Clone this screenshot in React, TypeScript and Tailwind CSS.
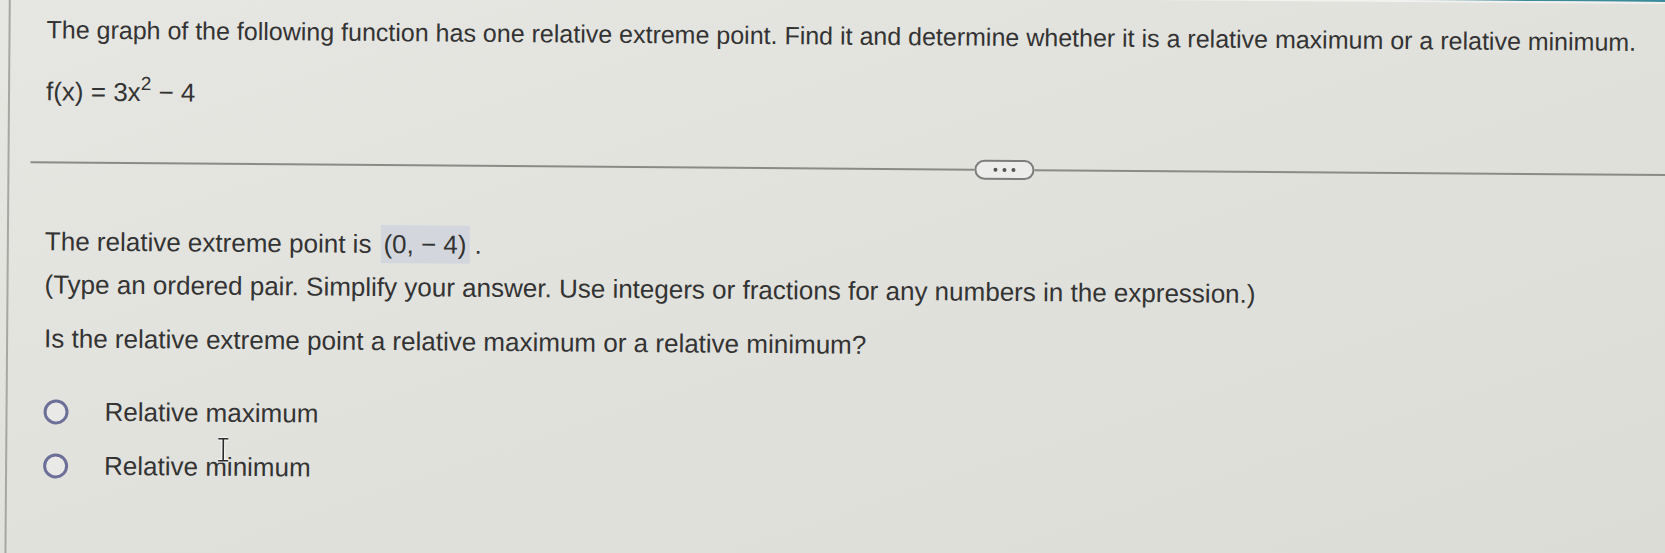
import React from "react";

function Radio({ label, cursor }: { label: string; cursor?: boolean }) {
  return (
    <div className="flex h-[30px] items-center pl-[36px]">
      <div className="h-[25px] w-[25px] shrink-0 rounded-full border-[3px] border-[#6c6f98] bg-[#e9e9e7]" />
      <span className="relative ml-[36px] whitespace-nowrap">
        {label}
        {cursor && (
          <svg
            className="absolute left-[111px] top-[-15px]"
            width="16"
            height="26"
            viewBox="0 0 16 26"
          >
            <path d="M3 2h10M8 2v22M3 24h10" stroke="#f3f3f1" strokeWidth="4" fill="none" />
            <path d="M3 2h10M8 2v22M3 24h10" stroke="#2a2a2a" strokeWidth="1.6" fill="none" />
          </svg>
        )}
      </span>
    </div>
  );
}

export default function App() {
  return (
    <div className="h-[553px] w-[1665px] overflow-hidden bg-linear-to-br from-[#e6e6e2] to-[#dcdcd7] font-['Liberation_Sans',Arial,sans-serif] text-[26px] leading-[30px] text-[#333333]">
      <div className="-mt-[29px] w-[1780px] origin-top-left rotate-[0.45deg]">
        <div className="h-[18px] bg-[#3b8b9b]" />
        <div className="h-[2px] bg-[#f1f1ef]" />
        <div className="ml-[9px] h-[640px] border-l-2 border-[#a6a6a3]">
          <div className="whitespace-nowrap pl-[36px] pt-[23px] text-[25px]">
            The graph of the following function has one relative extreme point. Find it and determine whether it is a relative maximum or a relative minimum.
          </div>
          <div className="mt-[29px] whitespace-nowrap pl-[36px]">
            f(x) = 3x<span className="align-[11px] text-[19px] leading-none">2</span> − 4
          </div>
          <div className="mt-[46px] flex h-[20px] items-center pl-[21px]">
            <div className="h-[2px] w-[944px] bg-[#8a8a87]" />
            <div className="flex h-[20px] w-[60px] shrink-0 items-center justify-center gap-[5px] rounded-full border-2 border-[#7d7d7b] bg-[#ececea]">
              <span className="h-[4px] w-[4px] rounded-full bg-[#555555]" />
              <span className="h-[4px] w-[4px] rounded-full bg-[#555555]" />
              <span className="h-[4px] w-[4px] rounded-full bg-[#555555]" />
            </div>
            <div className="h-[2px] flex-1 bg-[#8a8a87]" />
          </div>
          <div className="mt-[50px] flex h-[38px] items-center whitespace-nowrap pl-[36px]">
            <span>The relative extreme point is</span>
            <span className="ml-[9px] flex h-[38px] items-center bg-[#d3d7dd] px-[3px]">(0, − 4)</span>
            <span className="ml-[5px]">.</span>
          </div>
          <div className="mt-[9px] whitespace-nowrap pl-[36px]">
            (Type an ordered pair. Simplify your answer. Use integers or fractions for any numbers in the expression.)
          </div>
          <div className="mt-[24px] whitespace-nowrap pl-[36px]">
            Is the relative extreme point a relative maximum or a relative minimum?
          </div>
          <div className="mt-[43px]">
            <Radio label="Relative maximum" />
          </div>
          <div className="mt-[24px]">
            <Radio label="Relative minimum" cursor />
          </div>
        </div>
      </div>
    </div>
  );
}
